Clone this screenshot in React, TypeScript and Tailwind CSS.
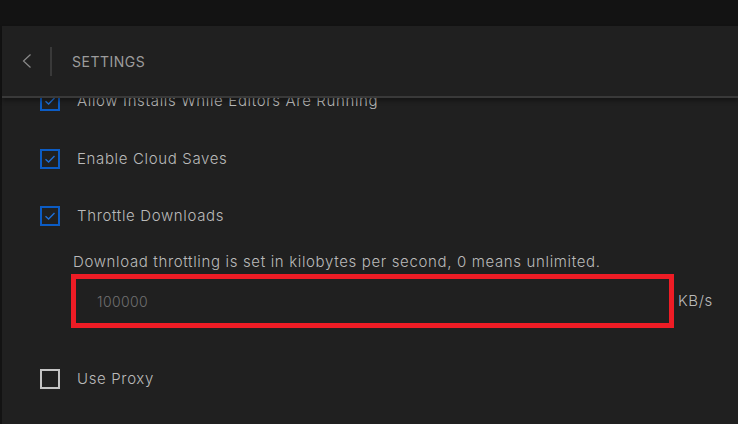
const FONT = { fontFamily: "Inter, 'Noto Sans', sans-serif" };

const Checkbox = ({ checked }: { checked: boolean }) => (
  <div
    className={
      checked
        ? "w-5 h-5 shrink-0 border-2 border-[#0c5cc4] flex items-center justify-center"
        : "w-5 h-5 shrink-0 border-2 border-[#c4c4c4]"
    }
  >
    {checked && (
      <svg width="12" height="10" viewBox="0 0 12 10" fill="none">
        <path d="M1.5 5.2 L4.6 8 L10.5 2" stroke="#1f6fd6" strokeWidth="1.4" />
      </svg>
    )}
  </div>
);

const Option = ({ label, checked }: { label: string; checked: boolean }) => (
  <div className="flex items-center h-5">
    <Checkbox checked={checked} />
    <span className="ml-[17px] text-[15px] leading-5 font-light text-[#bababa] tracking-[0.65px]">
      {label}
    </span>
  </div>
);

export default function App() {
  return (
    <div className="w-[738px] h-[424px] bg-[#131313] overflow-hidden" style={FONT}>
      <div className="h-[26px]" />
      <div className="ml-[2px] h-[398px] bg-[#202020] flex flex-col">
        <div className="h-[70px] box-content shrink-0 flex items-center border-b-2 border-[#393939] relative z-10 shadow-[0_3px_4px_rgba(0,0,0,0.35)] bg-[#202020]">
          <svg className="ml-[20px]" width="10" height="14" viewBox="0 0 10 14" fill="none">
            <path d="M8.5 0.5 L1.5 7 L8.5 13.5" stroke="#8a8a8a" strokeWidth="1.2" />
          </svg>
          <div className="ml-[18px] w-[2px] h-[29px] bg-[#393939]" />
          <span className="ml-[20px] text-[14px] text-[#9c9c9c] tracking-[0.5px]">SETTINGS</span>
        </div>
        <div className="flex-1 overflow-hidden">
          <div className="-mt-[7px] pl-[38px] flex flex-col">
            <Option label="Allow Installs While Editors Are Running" checked />
            <div className="mt-[38px]">
              <Option label="Enable Cloud Saves" checked />
            </div>
            <div className="mt-[37px]">
              <Option label="Throttle Downloads" checked />
            </div>
            <p className="mt-[26px] ml-[33px] text-[15px] leading-5 font-light text-[#bababa] tracking-[0.65px]">
              Download throttling is set in kilobytes per second, 0 means unlimited.
            </p>
            <div className="mt-[2px] ml-[31px] flex items-center">
              <div className="w-[603px] h-[54px] border-[5px] border-[#ee1c25] flex items-center pl-[21px]">
                <span className="text-[14px] font-light text-[#707070] tracking-[0.4px]">100000</span>
              </div>
              <span className="ml-[4px] text-[15px] font-light text-[#bababa] tracking-[0.65px]">KB/s</span>
            </div>
            <div className="mt-[41px]">
              <Option label="Use Proxy" checked={false} />
            </div>
          </div>
        </div>
      </div>
    </div>
  );
}
